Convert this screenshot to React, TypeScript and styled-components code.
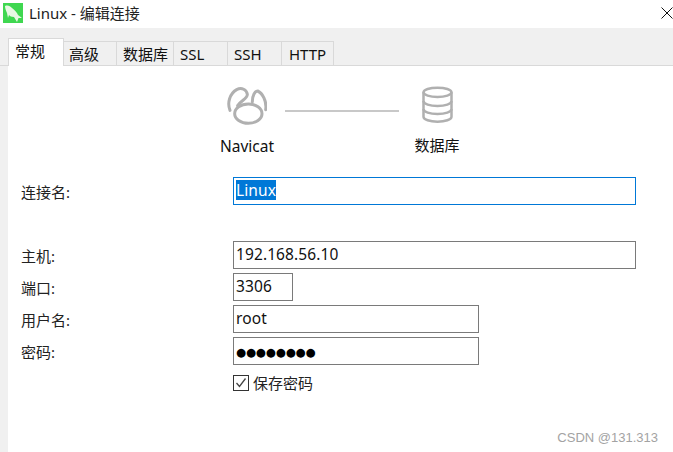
import React from 'react';
import styled, { createGlobalStyle } from 'styled-components';

const GlobalStyle = createGlobalStyle`
  html, body {
    margin: 0;
    padding: 0;
    background: #fff;
  }
  body {
    font-family: "Noto Sans", "Noto Sans CJK SC", sans-serif;
    font-size: 15px;
    color: #111;
  }
`;

const Window = styled.div`
  position: relative;
  width: 673px;
  height: 452px;
  overflow: hidden;
  display: flex;
  flex-direction: column;
  background: #f0f0f0;
`;

const TitleBar = styled.div`
  height: 28px;
  flex: none;
  box-sizing: border-box;
  display: flex;
  align-items: center;
  gap: 6px;
  padding: 0 0 3px 3px;
  background: #fff;
`;

const TitleText = styled.span`
  font-size: 15px;
  line-height: 24px;
  flex: 1;
  color: #222;
`;

const CloseButton = styled.div`
  width: 12px;
  height: 12px;
  display: flex;
`;

const TabStrip = styled.div`
  height: 38px;
  flex: none;
  display: flex;
  align-items: flex-end;
  padding-left: 8px;
  border-bottom: 1px solid #d9d9d9;
  box-sizing: border-box;
`;

const Tab = styled.div<{ $active?: boolean; $width: number; $pad: number }>`
  width: ${p => p.$width}px;
  height: ${p => (p.$active ? 28 : 24)}px;
  box-sizing: border-box;
  margin-bottom: ${p => (p.$active ? -1 : 0)}px;
  background: ${p => (p.$active ? '#fff' : '#f0f0f0')};
  border: 1px solid #d9d9d9;
  border-left-width: ${p => (p.$active ? 1 : 0)}px;
  border-bottom-width: 0;
  display: flex;
  align-items: center;
  padding-left: ${p => p.$pad}px;
  padding-bottom: ${p => (p.$active ? 3 : 0)}px;
  font-size: 15px;
  line-height: 20px;
  white-space: nowrap;
  color: #111;
`;

const Body = styled.div`
  flex: 1;
  margin-left: 8px;
  background: #fff;
  display: flex;
  flex-direction: column;
`;

const Diagram = styled.div`
  height: 111px;
  flex: none;
  box-sizing: border-box;
  display: flex;
  align-items: flex-start;
  padding: 20px 0 0 190px;
`;

const Node = styled.div<{ $size?: number }>`
  width: 98px;
  display: flex;
  flex-direction: column;
  align-items: center;
  gap: 10px;
  font-size: ${p => p.$size ?? 15}px;
  line-height: 20px;
`;

const Link = styled.div`
  width: 114px;
  height: 2px;
  margin: 24px 0 0 -11px;
  background: #c8c8c8;
`;

const SecondNode = styled(Node)`
  margin-left: -11px;
  line-height: 18px;
`;

const Form = styled.div`
  display: grid;
  grid-template-columns: 212px 1fr;
  grid-auto-rows: 28px;
  row-gap: 4px;
  padding: 0 0 0 13px;
`;

const FieldLabel = styled.div`
  font-size: 15px;
  line-height: 28px;
  padding-top: 1px;
  color: #222;
`;

const Spacer = styled.div`
  grid-column: 1 / span 2;
`;

const Input = styled.div<{ $width: number; $focused?: boolean }>`
  width: ${p => p.$width}px;
  height: 28px;
  box-sizing: border-box;
  border: 1px solid ${p => (p.$focused ? '#0078d7' : '#7a7a7a')};
  padding: 0 2px;
  font-size: 15.5px;
  line-height: 25px;
  letter-spacing: 0.1px;
  white-space: nowrap;
  color: #111;
`;

const Selected = styled.span`
  display: inline-block;
  background: #0078d7;
  color: #fff;
  line-height: 20px;
  margin-top: 2px;
  vertical-align: top;
`;

const Dots = styled.span`
  font-family: "DejaVu Sans", sans-serif;
  font-size: 11.5px;
  letter-spacing: -0.1px;
  line-height: 26px;
  color: #000;
`;

const CheckRow = styled.div`
  grid-column: 2;
  display: flex;
  align-items: center;
  gap: 4px;
  height: 28px;
  box-sizing: border-box;
  font-size: 15px;
  color: #222;
`;

const CheckBox = styled.div`
  width: 16px;
  height: 16px;
  box-sizing: border-box;
  border: 1px solid #333;
  display: flex;
  align-items: center;
  justify-content: center;
  background: #fff;
`;

const CheckLabel = styled.span`
  padding-bottom: 2px;
`;

const Watermark = styled.div`
  position: absolute;
  right: 15px;
  bottom: 7px;
  font-family: "Liberation Sans", sans-serif;
  font-size: 13px;
  color: #a3a3a3;
`;

const tabs = [
  { label: '常规', width: 56, pad: 6, active: true },
  { label: '高级', width: 53, pad: 5 },
  { label: '数据库', width: 57, pad: 6 },
  { label: 'SSL', width: 54, pad: 6 },
  { label: 'SSH', width: 54, pad: 6 },
  { label: 'HTTP', width: 52, pad: 7 },
];

const AppIcon = () => (
  <svg width="20" height="20" viewBox="0 0 20 20">
    <rect width="20" height="20" fill="#3fd750" />
    <path
      d="M2 3C5 2 7 3 9 5C12 7 14 10 15 12L19 15L15.500 15L14 19L11 14C8 14 7 13 6 12L5 15L4 10C3 8 2 5 2 3Z"
      fill="#e8f8e4"
    />
  </svg>
);

const NavicatIcon = () => (
  <svg width="40" height="40" viewBox="36 17 120 120" fill="none" stroke="#b0b0b0" strokeWidth="9" strokeLinecap="round">
    <path d="M45 90C36 68 44 40 65 28C80 20 95 28 97 42C98 55 78 60 68 76" />
    <ellipse cx="100" cy="100" rx="41" ry="29" />
    <path d="M112 64C112 45 120 32 128 32C142 38 156 62 152 88" />
  </svg>
);

const DatabaseIcon = () => (
  <svg width="33" height="40" viewBox="34 15 98 120" fill="none" stroke="#b0b0b0" strokeWidth="7.500">
    <ellipse cx="83" cy="34" rx="42" ry="14" />
    <path d="M41 34V107C41 116 60 122 83 122C106 122 125 116 125 107V34" />
    <path d="M41 60C41 69 60 75 83 75C106 75 125 69 125 60" />
    <path d="M41 84C41 93 60 99 83 99C106 99 125 93 125 84" />
  </svg>
);

export default function App() {
  return (
    <Window>
      <GlobalStyle />
      <TitleBar>
        <AppIcon />
        <TitleText>Linux - 编辑连接</TitleText>
        <CloseButton>
          <svg width="12" height="12" viewBox="0 0 12 12" stroke="#111" strokeWidth="1">
            <path d="M0.500 0.500l11 11M11.500 0.500l-11 11" />
          </svg>
        </CloseButton>
      </TitleBar>
      <TabStrip>
        {tabs.map(t => (
          <Tab key={t.label} $active={t.active} $width={t.width} $pad={t.pad}>
            {t.label}
          </Tab>
        ))}
      </TabStrip>
      <Body>
        <Diagram>
          <Node $size={15.5}>
            <NavicatIcon />
            Navicat
          </Node>
          <Link />
          <SecondNode>
            <DatabaseIcon />
            数据库
          </SecondNode>
        </Diagram>
        <Form>
          <FieldLabel>连接名:</FieldLabel>
          <Input $width={403} $focused>
            <Selected>Linux</Selected>
          </Input>
          <Spacer />
          <FieldLabel>主机:</FieldLabel>
          <Input $width={403}>192.168.56.10</Input>
          <FieldLabel>端口:</FieldLabel>
          <Input $width={60}>3306</Input>
          <FieldLabel>用户名:</FieldLabel>
          <Input $width={246}>root</Input>
          <FieldLabel>密码:</FieldLabel>
          <Input $width={246}>
            <Dots>●●●●●●●●</Dots>
          </Input>
          <CheckRow>
            <CheckBox>
              <svg width="12" height="12" viewBox="0 0 12 12" fill="none" stroke="#444" strokeWidth="1.300">
                <path d="M1.500 6l3 3.500 6-8" />
              </svg>
            </CheckBox>
            <CheckLabel>保存密码</CheckLabel>
          </CheckRow>
        </Form>
      </Body>
      <Watermark>CSDN @131.313</Watermark>
    </Window>
  );
}
